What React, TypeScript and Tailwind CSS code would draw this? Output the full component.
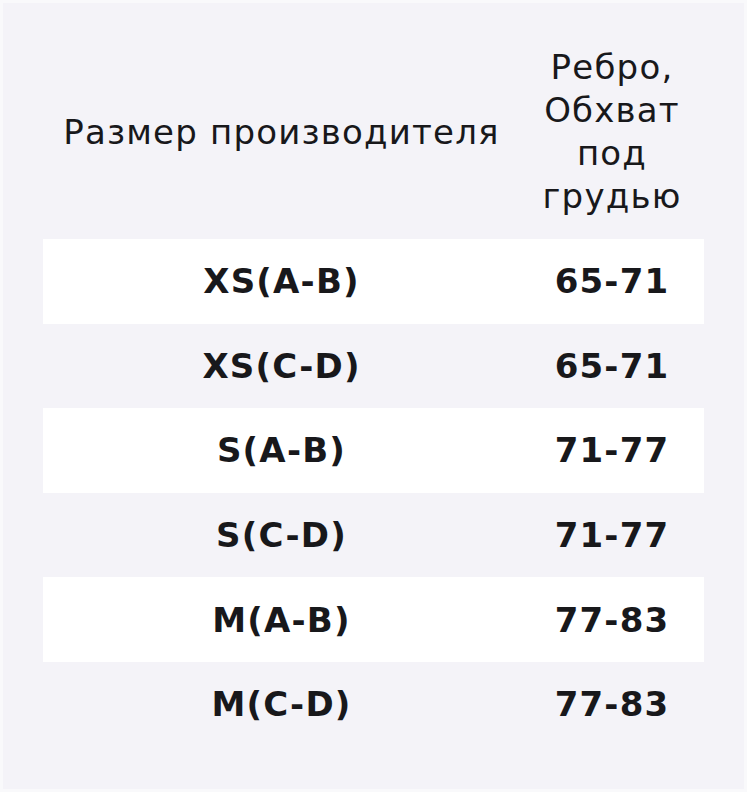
import React from "react";

const rows = [
  ["XS(A-B)", "65-71"],
  ["XS(C-D)", "65-71"],
  ["S(A-B)", "71-77"],
  ["S(C-D)", "71-77"],
  ["M(A-B)", "77-83"],
  ["M(C-D)", "77-83"],
];

export default function App() {
  return (
    <div className="w-[747px] h-[792px] bg-[#f9f9fb] p-[3px] text-[#18181b]" style={{ fontFamily: '"DejaVu Sans", sans-serif' }}>
      <div className="h-full bg-[#f4f3f8] px-[40px] pt-[40px]">
        <table className="w-[661px] border-collapse">
          <thead>
            <tr className="h-[196px]">
              <th className="w-[477px] pb-[18px] text-center align-middle font-normal text-[34px] leading-[43px] tracking-[1.2px]">Размер производителя</th>
              <th className="w-[184px] px-[18px] pb-[18px] text-center align-middle font-normal text-[34px] leading-[43px] tracking-[1.2px]">Ребро, Обхват под грудью</th>
            </tr>
          </thead>
          <tbody>
            {rows.map(([a, b], i) => (
              <tr key={i} className={i % 2 === 0 ? "h-[84.6px] bg-white" : "h-[84.6px] bg-[#f4f3f8]"}>
                <td className="text-center align-middle font-bold text-[34px] leading-[40px] tracking-[1.2px]">{a}</td>
                <td className="text-center align-middle font-bold text-[34px] leading-[40px] tracking-[1.2px]">{b}</td>
              </tr>
            ))}
          </tbody>
        </table>
      </div>
    </div>
  );
}
